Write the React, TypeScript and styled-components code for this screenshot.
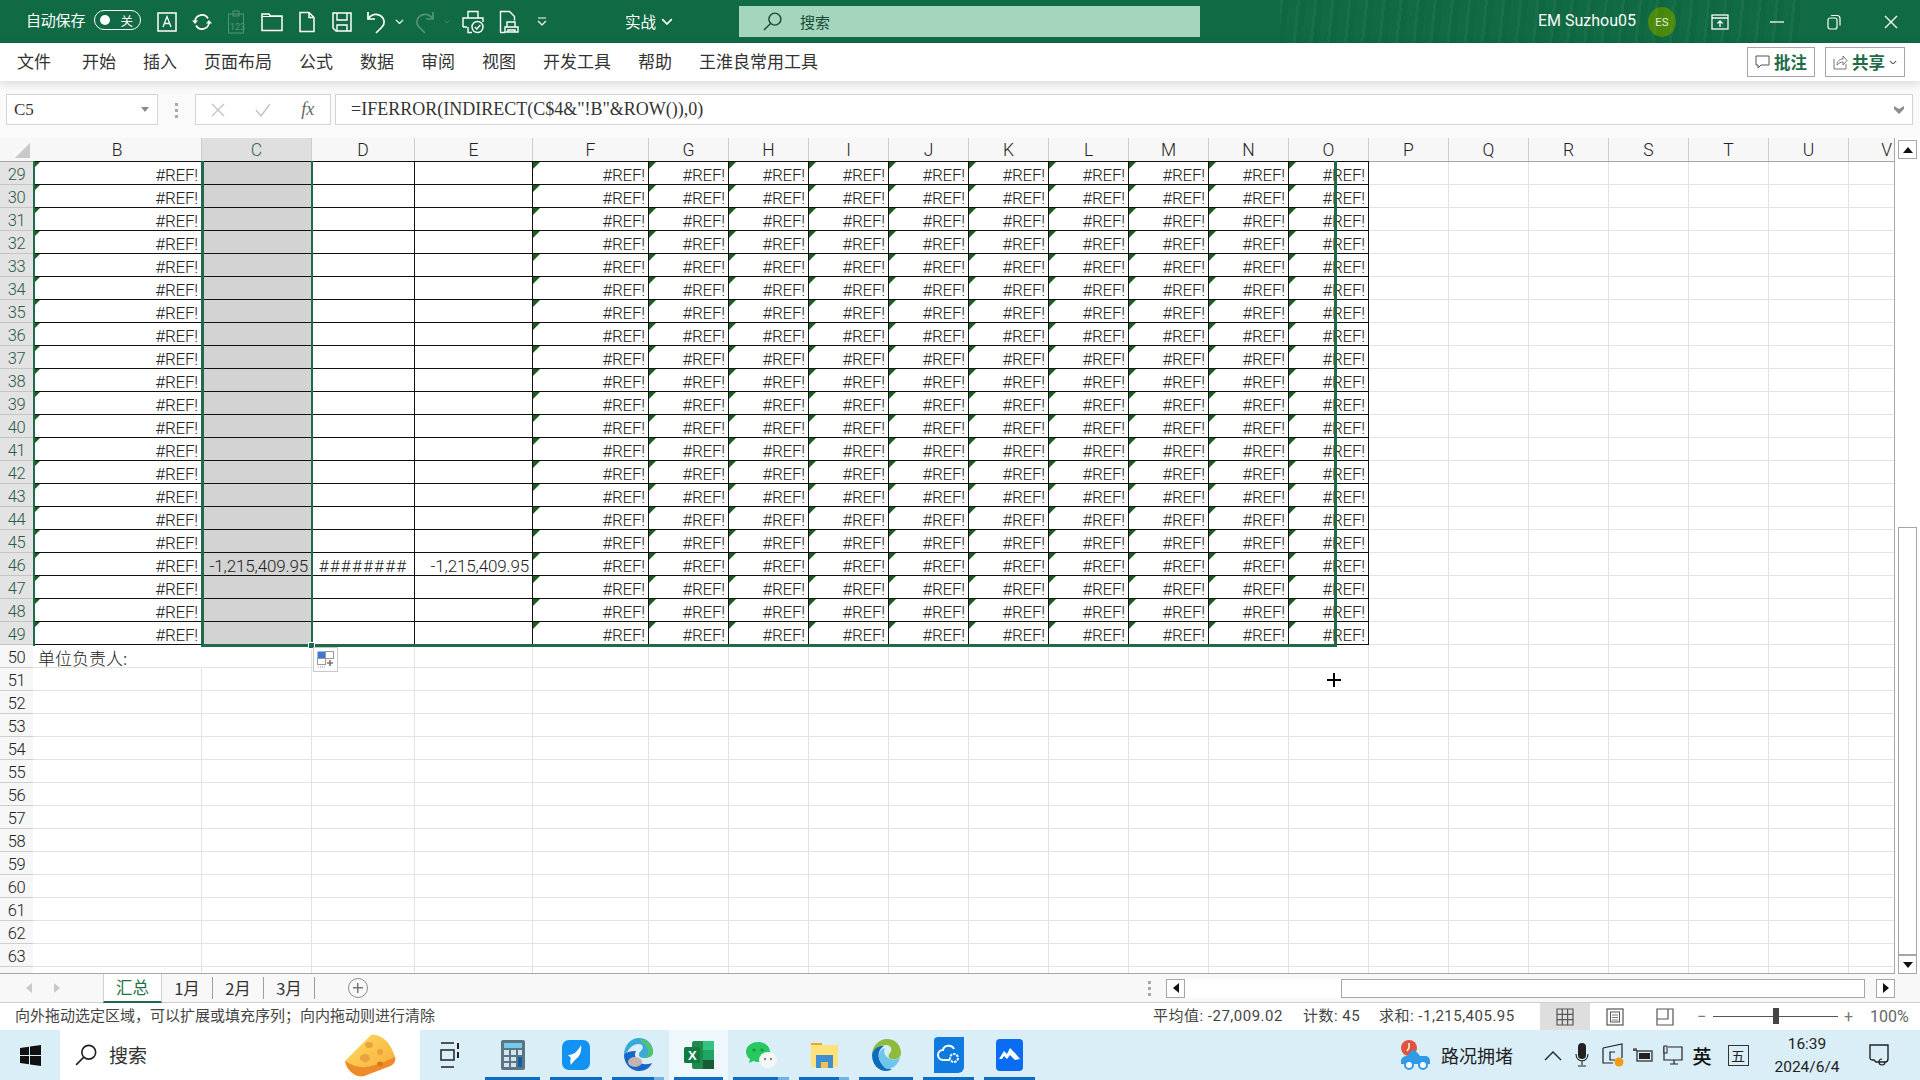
import React from 'react';
import styled, { createGlobalStyle } from 'styled-components';

const CJK = `"Noto Sans CJK SC", sans-serif`;
const UI = `"Roboto", "Noto Sans CJK SC", sans-serif`;
const CELL = `"Roboto", "Noto Sans CJK SC", sans-serif`;

const GlobalStyle = createGlobalStyle`
  html, body {
    margin: 0;
    padding: 0;
    background: #fff;
    overflow: hidden;
    font-family: ${UI};
  }
  * { box-sizing: border-box; }
`;

const Page = styled.div`
  width: 1920px;
  height: 1080px;
  display: flex;
  flex-direction: column;
  overflow: hidden;
  background: #fff;
`;

/* ---------- title bar ---------- */
const TitleBar = styled.div`
  position: relative;
  height: 43px;
  flex: none;
  display: flex;
  align-items: center;
  background: #106a43;
  color: #fff;
  &::after {
    content: '';
    position: absolute;
    top: 0;
    bottom: 0;
    left: 1280px;
    width: 520px;
    pointer-events: none;
    background: repeating-linear-gradient(96deg, rgba(255,255,255,.035) 0 3px, rgba(0,0,0,.03) 3px 9px, transparent 9px 17px);
  }
`;
const QatArea = styled.div`
  width: 739px;
  flex: none;
  display: flex;
  align-items: center;
  padding-left: 26px;
`;
const AutoSave = styled.span`
  font-family: ${CJK};
  font-size: 15px;
  width: 68px;
  white-space: nowrap;
  letter-spacing: -0.2px;
  margin-bottom: 4px;
`;
const Toggle = styled.div`
  width: 47px;
  height: 20px;
  flex: none;
  border: 1.5px solid #fff;
  border-radius: 10px;
  display: flex;
  align-items: center;
  justify-content: space-between;
  padding: 0 7px 0 5px;
  font-family: ${CJK};
  font-size: 12.5px;
  margin-right: 8px;
  margin-bottom: 3px;
  &::before {
    content: '';
    width: 10px;
    height: 10px;
    border-radius: 50%;
    background: #fff;
  }
`;
const Slot = styled.div<{ $w: number; $faded?: boolean }>`
  width: ${(p) => p.$w}px;
  flex: none;
  display: flex;
  align-items: center;
  justify-content: center;
  opacity: ${(p) => (p.$faded ? 0.28 : 1)};
`;
const FileName = styled.span`
  font-family: ${CJK};
  font-size: 15.5px;
  margin-left: 63px;
  margin-right: 5px;
  margin-bottom: 2px;
`;
const SearchBox = styled.div`
  width: 461px;
  height: 31px;
  flex: none;
  background: #a3d6bd;
  display: flex;
  align-items: center;
  gap: 18px;
  padding-left: 24px;
  color: #1a4b36;
  font-family: ${CJK};
  font-size: 15px;
  line-height: 28px;
`;
const UserName = styled.span`
  margin-left: 338px;
  margin-bottom: 2px;
  font-size: 16px;
  width: 98px;
  white-space: nowrap;
  font-family: ${UI};
`;
const Avatar = styled.div`
  width: 28px;
  height: 30px;
  margin-left: 12px;
  margin-right: 15px;
  border-radius: 50%;
  background: #4b8a0c;
  display: flex;
  align-items: center;
  justify-content: center;
  font-size: 11.5px;
  color: #e6f0da;
`;

/* ---------- ribbon tabs ---------- */
const RibbonTabs = styled.div`
  position: relative;
  z-index: 2;
  height: 38px;
  flex: none;
  display: flex;
  align-items: center;
  gap: 27px;
  padding: 0 15px 0 17px;
  background: #fff;
  box-shadow: 0 3px 9px rgba(0, 0, 0, 0.13);
  font-family: ${CJK};
  font-size: 17px;
  color: #333;
`;
const RibbonTab = styled.span<{ $first?: boolean }>`
  margin-right: ${(p) => (p.$first ? '4px' : '0')};
  margin-bottom: 3px;
`;
const RibbonButtons = styled.div`
  margin-left: auto;
  display: flex;
  gap: 10px;
`;
const RibbonButton = styled.div<{ $w: number }>`
  width: ${(p) => p.$w}px;
  height: 30px;
  border: 1px solid #a6a6a6;
  display: flex;
  align-items: center;
  justify-content: center;
  gap: 4px;
  font-weight: 700;
  font-size: 16.5px;
  color: #1d6b49;
`;

/* ---------- formula bar ---------- */
const FormulaArea = styled.div`
  height: 57px;
  flex: none;
  padding: 13px 7px 0 6px;
  display: flex;
  align-items: flex-start;
  background: #fafafa;
`;
const NameBox = styled.div`
  width: 152px;
  height: 31px;
  background: #fff;
  border: 1px solid #d4d4d4;
  display: flex;
  align-items: center;
  justify-content: space-between;
  padding: 0 8px 0 7px;
  font-family: "Liberation Serif", serif;
  font-size: 17px;
  color: #333;
`;
const Caret = styled.span`
  width: 0;
  height: 0;
  border: 4px solid transparent;
  border-top: 5px solid #8a8a8a;
  border-bottom: 0;
`;
const Dots = styled.div`
  width: 37px;
  display: flex;
  flex-direction: column;
  align-items: center;
  gap: 3px;
  padding-top: 9px;
  i {
    width: 3px;
    height: 3px;
    background: #a9a9a9;
  }
`;
const FxBox = styled.div`
  width: 136px;
  height: 31px;
  background: #fff;
  border: 1px solid #d4d4d4;
  margin-right: 4px;
  display: flex;
  align-items: center;
  color: #bdbdbd;
`;
const FxSlot = styled.div`
  width: 45px;
  display: flex;
  justify-content: center;
`;
const FxMark = styled.span`
  font-family: "Liberation Serif", serif;
  font-style: italic;
  font-size: 18px;
  color: #666;
`;
const FormulaInput = styled.div`
  flex: 1;
  height: 31px;
  background: #fff;
  border: 1px solid #d4d4d4;
  display: flex;
  align-items: center;
  justify-content: space-between;
  padding: 0 8px 0 15px;
  font-family: "Liberation Serif", serif;
  font-size: 18px;
  color: #333;
`;

/* ---------- sheet ---------- */
const SheetArea = styled.div`
  height: 836px;
  flex: none;
  display: flex;
  background: #fff;
`;
const Grid = styled.div`
  position: relative;
  width: 1895px;
  height: 836px;
  overflow: hidden;
  flex: none;
  border-right: 1px solid #a8a8a8;
  border-bottom: 1px solid #a8a8a8;
`;
const HeaderRow = styled.div`
  display: flex;
  height: 24px;
  background: #f7f7f7;
  border-bottom: 1px solid #a5a5a5;
`;
const Corner = styled.div`
  width: 33px;
  flex: none;
  position: relative;
  &::after {
    content: '';
    position: absolute;
    right: 3px;
    bottom: 3px;
    border-style: solid;
    border-width: 0 0 15px 15px;
    border-color: transparent transparent #c9c9c9 transparent;
  }
`;
const ColHead = styled.div<{ $w: number; $active?: boolean; $right?: boolean }>`
  width: ${(p) => p.$w}px;
  flex: none;
  display: flex;
  align-items: center;
  justify-content: ${(p) => (p.$right ? 'flex-end' : 'center')};
  padding: 1px ${(p) => (p.$right ? '2px' : '0')} 0 0;
  background: ${(p) => (p.$active ? '#dfdfdf' : 'transparent')};
  border-right: 1px solid #cdcdcd;
  font-family: ${CELL};
  font-weight: 300;
  font-size: 17.5px;
  color: ${(p) => (p.$active ? '#2f6b50' : '#222')};
`;
const Row = styled.div`
  display: flex;
  height: 23px;
`;
const RowHead = styled.div<{ $active?: boolean }>`
  width: 33px;
  flex: none;
  display: flex;
  align-items: center;
  justify-content: center;
  padding-top: 3px;
  background: ${(p) => (p.$active ? '#e3e3e3' : '#f7f7f7')};
  border-bottom: 1px solid ${(p) => (p.$active ? '#c4c4c4' : '#cfcfcf')};
  font-family: ${CELL};
  font-weight: 300;
  font-size: 16.5px;
  letter-spacing: -0.4px;
  color: ${(p) => (p.$active ? '#2d5a46' : '#222')};
`;
const Cell = styled.div<{
  $w: number;
  $table?: boolean;
  $fill?: boolean;
  $tri?: boolean;
  $noRight?: boolean;
  $align?: 'left' | 'center' | 'right';
}>`
  position: relative;
  width: ${(p) => p.$w}px;
  flex: none;
  display: flex;
  align-items: center;
  justify-content: ${(p) =>
    p.$align === 'center' ? 'center' : p.$align === 'left' ? 'flex-start' : 'flex-end'};
  padding: 3px ${(p) => (!p.$align || p.$align === 'right' ? '3px' : '0')} 0
    ${(p) => (p.$align === 'left' ? '5px' : '0')};
  white-space: nowrap;
  background: ${(p) => (p.$fill ? '#d3d3d3' : 'transparent')};
  border-bottom: 1px solid ${(p) => (p.$table ? '#111' : '#e3e3e3')};
  border-right: 1px solid ${(p) => (p.$table ? '#111' : p.$noRight ? 'transparent' : '#e3e3e3')};
  font-family: ${CELL};
  font-weight: 300;
  font-size: 17px;
  letter-spacing: -0.2px;
  color: #222;
  &::before {
    content: ${(p) => (p.$tri ? "''" : 'none')};
    position: absolute;
    left: 0;
    top: 0;
    border-style: solid;
    border-width: 7px 7px 0 0;
    border-color: #1c5e20 transparent transparent transparent;
  }
`;
const WideNum = styled.span<{ $spacing: number }>`
  letter-spacing: ${(p) => p.$spacing}px;
`;
const SignLabel = styled.span`
  font-family: ${CJK};
  font-size: 17px;
  font-weight: 300;
  letter-spacing: 0;
  color: #222;
`;
const SelLine = styled.div<{ $x: number; $w: number }>`
  position: absolute;
  left: ${(p) => p.$x}px;
  top: 23px;
  width: ${(p) => p.$w}px;
  height: 485px;
  background: #1f6a4b;
`;
const SelBottom = styled.div`
  position: absolute;
  left: 201px;
  top: 506px;
  width: 1136px;
  height: 3px;
  background: #1f6a4b;
`;
const Handle = styled.div`
  position: absolute;
  left: 308px;
  top: 504px;
  width: 7px;
  height: 7px;
  background: #1f6a4b;
  border: 1px solid #fff;
`;
const TopRule = styled.div`
  position: absolute;
  left: 33px;
  top: 23px;
  width: 1336px;
  height: 1px;
  background: #111;
`;
const FillPopup = styled.div`
  position: absolute;
  left: 313px;
  top: 509px;
  width: 25px;
  height: 25px;
  background: #fff;
  border: 1px solid #c9c9c9;
  display: flex;
  align-items: center;
  justify-content: center;
`;
const PlusCursor = styled.div`
  position: absolute;
  left: 1327px;
  top: 535px;
  width: 14px;
  height: 14px;
  background:
    linear-gradient(#000, #000) center / 14px 2px no-repeat,
    linear-gradient(#000, #000) center / 2px 14px no-repeat;
`;

const ScrollColumn = styled.div`
  width: 25px;
  flex: none;
  display: flex;
  flex-direction: column;
  align-items: center;
  padding: 2px 3px 0 3px;
`;
const ScrollButton = styled.div<{ $w?: number }>`
  width: ${(p) => p.$w ?? 19}px;
  height: 19px;
  flex: none;
  background: #fff;
  border: 1px solid #a6a6a6;
  display: flex;
  align-items: center;
  justify-content: center;
`;
const Tri = styled.span<{ $dir: 'up' | 'down' | 'left' | 'right'; $color?: string }>`
  width: 0;
  height: 0;
  border: 5px solid transparent;
  ${(p) => {
    const c = p.$color ?? '#111';
    if (p.$dir === 'up') return `border-top: 0; border-bottom: 6px solid ${c};`;
    if (p.$dir === 'down') return `border-bottom: 0; border-top: 6px solid ${c};`;
    if (p.$dir === 'left') return `border-left: 0; border-right: 6px solid ${c};`;
    return `border-right: 0; border-left: 6px solid ${c};`;
  }}
`;
const VThumb = styled.div`
  width: 19px;
  height: 428px;
  margin-top: 368px;
  flex: none;
  border: 1px solid #a6a6a6;
`;
const VFill = styled.div`
  flex: 1;
`;

/* ---------- sheet tabs ---------- */
const TabsBar = styled.div`
  height: 29px;
  flex: none;
  display: flex;
  align-items: center;
  padding-right: 25px;
  background: #f8f8f8;
  border-bottom: 1px solid #cfcfcf;
`;
const TabNav = styled.div`
  width: 103px;
  display: flex;
  gap: 22px;
  padding-left: 26px;
`;
const ActiveTab = styled.div`
  width: 59px;
  height: 29px;
  background: #fff;
  border-left: 1px solid #d0d0d0;
  border-right: 1px solid #d0d0d0;
  border-bottom: 2px solid #1f6a4b;
  display: flex;
  align-items: center;
  justify-content: center;
  font-family: ${CJK};
  font-size: 16.5px;
  color: #217346;
`;
const SheetTab = styled.div`
  width: 51px;
  height: 22px;
  display: flex;
  align-items: center;
  justify-content: center;
  border-right: 1px solid #9e9e9e;
  font-family: ${CJK};
  font-size: 16.5px;
  color: #333;
`;
const AddSheet = styled.div`
  width: 20px;
  height: 20px;
  margin-left: 33px;
  border: 1.5px solid #8c8c8c;
  border-radius: 50%;
  background:
    linear-gradient(#777, #777) center / 10px 1.5px no-repeat,
    linear-gradient(#777, #777) center / 1.5px 10px no-repeat;
`;
const HDots = styled(Dots)`
  width: 6px;
  margin-left: auto;
  margin-right: 14px;
  padding-top: 0;
`;
const HTrack = styled.div`
  flex: none;
  width: 156px;
  height: 19px;
  background: #fff;
`;
const HThumb = styled.div`
  flex: none;
  width: 524px;
  height: 19px;
  margin-right: 11px;
  background: #fff;
  border: 1px solid #a6a6a6;
`;

/* ---------- status bar ---------- */
const StatusBar = styled.div`
  height: 27px;
  flex: none;
  display: flex;
  align-items: center;
  font-family: ${UI};
  font-size: 15px;
  line-height: 25px;
  color: #444;
  background: #fff;
`;
const StatusMsg = styled.div`
  width: 1153px;
  padding-left: 15px;
  white-space: nowrap;
`;
const StatusStat = styled.div<{ $w: number }>`
  width: ${(p) => p.$w}px;
  flex: none;
  white-space: nowrap;
  letter-spacing: 0.5px;
`;
const ViewButton = styled.div<{ $active?: boolean }>`
  width: 50px;
  height: 27px;
  flex: none;
  display: flex;
  align-items: center;
  justify-content: center;
  background: ${(p) => (p.$active ? '#dedede' : 'transparent')};
`;
const ZoomSign = styled.div<{ $w: number }>`
  width: ${(p) => p.$w}px;
  flex: none;
  text-align: center;
  color: #777;
  font-size: 16px;
`;
const ZoomTrack = styled.div`
  position: relative;
  width: 125px;
  height: 1px;
  flex: none;
  background: #555;
  &::after {
    content: '';
    position: absolute;
    left: 60px;
    top: -8px;
    width: 6px;
    height: 16px;
    background: #444;
  }
`;
const ZoomValue = styled.div`
  margin-left: 11px;
  color: #666;
  font-size: 16px;
`;

/* ---------- taskbar ---------- */
const Taskbar = styled.div`
  height: 50px;
  flex: none;
  display: flex;
  align-items: center;
  background: #d9eef7;
  color: #222;
`;
const StartButton = styled.div`
  width: 60px;
  display: flex;
  justify-content: center;
`;
const TaskSearch = styled.div`
  width: 360px;
  height: 50px;
  flex: none;
  background: #fff;
  display: flex;
  align-items: center;
  padding-left: 15px;
  gap: 12px;
  font-family: ${CJK};
  font-size: 19px;
  line-height: 24px;
  color: #333;
`;
const CheeseWrap = styled.div`
  margin-left: auto;
  margin-right: 24px;
  display: flex;
`;
const TaskSlot = styled.div<{ $w: number; $active?: boolean }>`
  position: relative;
  width: ${(p) => p.$w}px;
  height: 50px;
  flex: none;
  display: flex;
  align-items: center;
  justify-content: center;
  background: ${(p) => (p.$active ? 'rgba(255,255,255,.55)' : 'transparent')};
`;
const RunLine = styled.div<{ $stack?: boolean }>`
  position: absolute;
  left: 5px;
  right: 5px;
  bottom: 0;
  height: 3px;
  background: ${(p) =>
    p.$stack ? 'linear-gradient(90deg, #0a6dc6 0 80%, #6fb2e6 80% 100%)' : '#0a6dc6'};
`;
const Tray = styled.div`
  margin-left: auto;
  padding-right: 14px;
  display: flex;
  align-items: center;
`;
const TrayItem = styled.div<{ $w: number }>`
  width: ${(p) => p.$w}px;
  flex: none;
  display: flex;
  align-items: center;
  justify-content: center;
`;
const TrafficText = styled.div`
  width: 102px;
  padding-left: 5px;
  font-family: ${CJK};
  font-size: 18px;
  white-space: nowrap;
`;
const ImeLabel = styled.span`
  font-family: ${CJK};
  font-size: 19px;
  font-weight: 500;
  color: #111;
`;
const ImeBox = styled.span`
  width: 21px;
  height: 21px;
  border: 1px solid #333;
  display: flex;
  align-items: center;
  justify-content: center;
  font-family: ${CJK};
  font-size: 14px;
`;
const Clock = styled.div`
  width: 90px;
  flex: none;
  display: flex;
  flex-direction: column;
  align-items: center;
  gap: 3px;
  font-size: 15.5px;
  line-height: 20px;
  color: #222;
`;

/* ---------- icons ---------- */
type IconProps = { s?: string };
const Svg = ({ w, h, children }: { w: number; h: number; children: React.ReactNode }) => (
  <svg width={w} height={h} viewBox={`0 0 ${w} ${h}`} fill="none">
    {children}
  </svg>
);

const QatBoxA = () => (
  <Svg w={20} h={20}>
    <rect x="1" y="1" width="18" height="18" stroke="#fff" strokeWidth="1.5" />
    <path d="M6 15L10 4.5L14 15M7.5 11.5h5" stroke="#fff" strokeWidth="1.3" />
  </Svg>
);
const QatSync = () => (
  <Svg w={22} h={20}>
    <path d="M4 9a7 7 0 0 1 13-2.5M18 11a7 7 0 0 1-13 2.5" stroke="#fff" strokeWidth="1.7" />
    <path d="M1 8.5h6L4 12zM15 11.5h6L18 8z" fill="#fff" />
  </Svg>
);
const QatClip = () => (
  <Svg w={20} h={24}>
    <rect x="1.5" y="4" width="15" height="19" stroke="#fff" />
    <rect x="6" y="1" width="6" height="5" stroke="#fff" />
    <text x="3" y="20" fontSize="9" fill="#fff" fontFamily="Roboto">123</text>
  </Svg>
);
const QatFolder = () => (
  <Svg w={22} h={20}>
    <path d="M1 18.5V2h7l1.5 2H21v14.5z" stroke="#fff" strokeWidth="1.5" />
    <path d="M1 4.5h20" stroke="#fff" strokeWidth="1" />
  </Svg>
);
const QatDoc = () => (
  <Svg w={18} h={22}>
    <path d="M2 1.5h9l5 5v14H2zM11 1.5v5h5" stroke="#fff" strokeWidth="1.5" />
  </Svg>
);
const QatSave = () => (
  <Svg w={22} h={22}>
    <path d="M2 2h18v18H5l-3-3z" stroke="#fff" strokeWidth="1.5" />
    <path d="M6 2v7h10V2M6 20v-6h10v6" stroke="#fff" strokeWidth="1.4" />
  </Svg>
);
const QatUndo = ({ flip }: { flip?: boolean }) => (
  <svg width="22" height="24" viewBox="0 0 22 24" fill="none" style={flip ? { transform: 'scaleX(-1)' } : undefined}>
    <path d="M2 2v7h7" stroke="#fff" strokeWidth="1.7" />
    <path d="M2 9c3-5 9-6 13-3c4 3 4 8 1 11l-6 6" stroke="#fff" strokeWidth="1.7" />
  </svg>
);
const SmallChevron = ({ s = '#fff', w = 9 }: IconProps & { w?: number }) => (
  <svg width={w} height={w * 0.6} viewBox="0 0 10 6" fill="none">
    <path d="M1 1l4 4l4-4" stroke={s} strokeWidth="1.4" />
  </svg>
);
const QatPrintCheck = () => (
  <Svg w={22} h={24}>
    <path d="M6 8V1.5h10V8M1 17V8h20v4M5 17H1M6 17v5.5h4" stroke="#fff" strokeWidth="1.4" />
    <circle cx="15.5" cy="17" r="5.5" stroke="#fff" strokeWidth="1.4" fill="#106a43" />
    <path d="M12.8 17l2 2l3.5-4" stroke="#fff" strokeWidth="1.3" />
  </Svg>
);
const QatDocPrint = () => (
  <Svg w={20} h={24}>
    <path d="M1.5 23V1.5h9l5 5v4M1.5 22.5H6" stroke="#fff" strokeWidth="1.4" />
    <path d="M8 17v-5h8v5M6 22v-5h13v5zM9 22v-2h7v2" stroke="#fff" strokeWidth="1.4" />
  </Svg>
);
const QatMore = () => (
  <Svg w={10} h={10}>
    <path d="M1 1h8M1 4l4 4l4-4" stroke="#fff" strokeWidth="1.2" />
  </Svg>
);
const Magnifier = ({ s = '#1a4b36', size = 19 }: IconProps & { size?: number }) => (
  <svg width={size} height={size} viewBox="0 0 20 20" fill="none">
    <circle cx="12.5" cy="7.5" r="6.3" stroke={s} strokeWidth="1.5" />
    <path d="M8 12L1 19" stroke={s} strokeWidth="1.5" />
  </svg>
);
const RibbonDisplay = () => (
  <Svg w={18} h={16}>
    <rect x="1" y="1" width="16" height="14" stroke="#fff" strokeWidth="1.3" />
    <path d="M1 4h16" stroke="#fff" strokeWidth="1.5" />
    <path d="M9 13V7M6.5 9.5L9 7l2.5 2.5" stroke="#fff" strokeWidth="1.3" />
  </Svg>
);
const WinMin = () => (
  <Svg w={14} h={4}>
    <path d="M0 2h14" stroke="#fff" strokeWidth="1.3" />
  </Svg>
);
const WinRestore = () => (
  <Svg w={14} h={16}>
    <rect x="1" y="4" width="9" height="11" rx="2" stroke="#fff" strokeWidth="1.2" />
    <path d="M4 1.5h6a3 3 0 0 1 3 3v7" stroke="#fff" strokeWidth="1.2" />
  </Svg>
);
const WinClose = () => (
  <Svg w={14} h={14}>
    <path d="M1 1l12 12M13 1L1 13" stroke="#fff" strokeWidth="1.3" />
  </Svg>
);
const CommentIcon = () => (
  <Svg w={15} h={14}>
    <path d="M1 1h13v9H6l-3 3v-3H1z" stroke="#555" strokeWidth="1" />
  </Svg>
);
const ShareIcon = () => (
  <Svg w={15} h={15}>
    <path d="M1 4v10h12V9" stroke="#777" strokeWidth="1" />
    <path d="M4 10c0-4 3-6 6-6V1l4 4.5L10 10V7C8 7 6 8 4 10z" stroke="#777" strokeWidth="1" />
  </Svg>
);
const FxX = () => (
  <Svg w={14} h={14}>
    <path d="M1 1l12 12M13 1L1 13" stroke="#c4c4c4" strokeWidth="1.4" />
  </Svg>
);
const FxCheck = () => (
  <Svg w={16} h={14}>
    <path d="M1 7l5 6L15 1" stroke="#c4c4c4" strokeWidth="1.4" />
  </Svg>
);
const DownGuard = () => (
  <Svg w={10} h={8}>
    <path d="M0 0l5 3l5-3v3L5 8L0 3z" fill="#8d8d8d" />
  </Svg>
);
const AutoFillIcon = () => (
  <Svg w={17} h={17}>
    <rect x="0.5" y="0.5" width="8" height="7" fill="#3d78d8" />
    <rect x="8.5" y="0.5" width="8" height="7" stroke="#999" />
    <rect x="0.5" y="7.5" width="8" height="6" stroke="#999" />
    <path d="M1 16h7" stroke="#999" strokeDasharray="1 1" />
    <path d="M13 9v6M10 12h6" stroke="#777" strokeWidth="1.6" />
  </Svg>
);
const GridViewIcon = () => (
  <Svg w={18} h={18}>
    <path d="M1 1h16v16H1zM1 6.3h16M1 11.6h16M6.3 1v16M11.6 1v16" stroke="#555" strokeWidth="1.2" />
  </Svg>
);
const PageViewIcon = () => (
  <Svg w={18} h={18}>
    <rect x="1" y="1" width="16" height="16" stroke="#555" strokeWidth="1.2" />
    <rect x="4.5" y="4" width="9" height="10" stroke="#555" />
    <path d="M6 7h6M6 9.5h6M6 12h6" stroke="#777" />
  </Svg>
);
const BreakViewIcon = () => (
  <Svg w={18} h={18}>
    <path d="M1 1h16v16H1zM1 11h11V1" stroke="#555" strokeWidth="1.2" />
  </Svg>
);
const WindowsLogo = () => (
  <Svg w={21} h={21}>
    <path d="M0 3l9-1.3V10H0zM10 1.5L21 0v10H10zM0 11h9v8.3L0 18zM10 11h11v10l-11-1.5z" fill="#111" />
  </Svg>
);
const Cheese = () => (
  <Svg w={52} h={44}>
    <defs>
      <linearGradient id="ch" x1="0" y1="0" x2="1" y2="1">
        <stop offset="0" stopColor="#ffdc5e" />
        <stop offset="1" stopColor="#f6a93b" />
      </linearGradient>
    </defs>
    <path d="M1 28L27 2c10-2 20 8 24 22c1 4-1 7-5 9L20 43c-8 2-17-5-19-15z" fill="url(#ch)" />
    <path d="M1 28c6 4 14 7 21 6c10-1 20-6 29-10c1 4-1 7-5 9L20 43c-8 2-17-5-19-15z" fill="#ee8a2a" />
    <ellipse cx="25" cy="12" rx="4" ry="3" fill="#e9a33d" />
    <ellipse cx="36" cy="19" rx="3" ry="3" fill="#e9a33d" />
    <ellipse cx="21" cy="25" rx="5" ry="4" fill="#e9a33d" />
    <ellipse cx="36" cy="31" rx="3" ry="2.5" fill="#d9771f" />
  </Svg>
);
const TaskView = () => (
  <Svg w={20} h={26}>
    <path d="M1 1h13M1 25h13M1 8h13v10H1z" stroke="#222" strokeWidth="1.5" />
    <path d="M18 1v6M18 10v6" stroke="#222" strokeWidth="2" />
  </Svg>
);
const Calculator = () => (
  <Svg w={24} h={30}>
    <rect width="24" height="30" rx="2" fill="#5d7482" />
    <rect x="3" y="3" width="18" height="5" fill="#71cbe9" />
    <path d="M3 10h5v5H3zM10 10h5v5h-5zM17 10h4v5h-4zM3 17h5v4H3zM10 17h5v4h-5zM3 23h5v4H3zM10 23h5v4h-5z" fill="#cfe6f0" />
    <rect x="17" y="17" width="4" height="10" fill="#115ea3" />
  </Svg>
);
const BlueWing = () => (
  <Svg w={28} h={30}>
    <rect width="28" height="30" rx="7" fill="#1293f3" />
    <path d="M19 5c1 6-1 11-5 14c-2 2-4 4-5 6c-1-3-1-5 0-7L6 15c3 0 6-1 8-3c2-2 4-5 5-7z" fill="#fff" />
  </Svg>
);
const EdgeBeta = () => (
  <Svg w={32} h={36}>
    <path d="M2 18C2 8 9 1 17 1c8 0 14 6 14 14c0 4-4 6-9 6c-3 0-5-1-5-3c0-5 6-5 3-10C15 5 7 9 4 18z" fill="#38a9d9" />
    <path d="M17 2c7 0 14 5 14 13c0 5-5 6-9 5c5 0 6-9 0-13z" fill="#4fc36f" />
    <path d="M2 18c0 9 7 16 15 16c6 0 11-3 13-8c-5 2-11 2-14-2c-3-3-4-7-2-10C8 14 5 15 2 18z" fill="#1667c7" />
    <ellipse cx="13" cy="25" rx="7" ry="5" fill="#c7b2ad" />
  </Svg>
);
const ExcelIcon = () => (
  <Svg w={30} h={30}>
    <rect x="8" y="1" width="22" height="28" rx="2" fill="#1f8a4c" />
    <rect x="19" y="1" width="11" height="9" fill="#33c481" />
    <rect x="19" y="10" width="11" height="10" fill="#21a366" />
    <rect x="19" y="20" width="11" height="9" fill="#185c37" />
    <rect x="0" y="7" width="16" height="16" rx="1.5" fill="#107c41" />
    <text x="4" y="20" fontSize="13" fontWeight="700" fill="#fff" fontFamily="Liberation Sans">X</text>
  </Svg>
);
const WeChatIcon = () => (
  <Svg w={32} h={30}>
    <path d="M13 2C6 2 1 6.5 1 12c0 3 2 6 4 7l-1 4l4.500-2c1.500.5 3 1 4.500 1c7 0 12-4.500 12-10S20 2 13 2z" fill="#29c760" />
    <circle cx="9" cy="10" r="1.6" fill="#139a44" />
    <circle cx="17" cy="10" r="1.6" fill="#139a44" />
    <ellipse cx="23" cy="20" rx="9" ry="8" fill="#f6f6f6" />
    <circle cx="20" cy="19" r="1.2" fill="#888" />
    <circle cx="26" cy="19" r="1.2" fill="#888" />
  </Svg>
);
const FolderIcon = () => (
  <Svg w={28} h={28}>
    <path d="M1 2h11v4H1z" fill="#e5a92a" />
    <rect x="1" y="4" width="27" height="22" fill="#ffe27a" />
    <path d="M6 14h17v13h-5v-6h-7v6H6z" fill="#3f8ed3" />
    <rect x="11" y="21" width="7" height="6" fill="#f0c14d" />
  </Svg>
);
const EdgeIcon = () => (
  <Svg w={32} h={34}>
    <path d="M2 17C2 8 9 1 17 1c8 0 14 6 14 14c0 5-5 7-10 6c-3-1-3-4-1-6c3-3 1-8-4-8C9 7 4 11 2 17z" fill="#8dbb3a" />
    <path d="M2 17C3 11 9 7 14 8c-5 3-7 9-4 15c2 4 7 8 12 8c-2 1-3 2-6 2C8 33 2 26 2 17z" fill="#0f6cbd" />
    <path d="M10 23c-3-6 0-12 5-13c-2 4 0 9 5 11c4 1 8 0 10-2c-1 7-7 12-13 12c-3-1-5-4-7-8z" fill="#6fc6ec" />
  </Svg>
);
const CloudIcon = () => (
  <Svg w={30} h={36}>
    <path d="M4 0h26v30a6 6 0 0 1-6 6H0V4a4 4 0 0 1 4-4z" fill="#0f7be0" />
    <path d="M9 23a5 5 0 0 1 0-10c1-5 9-6 11-1" stroke="#fff" strokeWidth="2" />
    <path d="M9 23h7" stroke="#fff" strokeWidth="2" />
    <circle cx="20" cy="21" r="4" stroke="#fff" strokeWidth="2" strokeDasharray="2.500 1" />
  </Svg>
);
const MIcon = () => (
  <Svg w={27} h={32}>
    <rect width="27" height="32" rx="4" fill="#0a6cf5" />
    <path d="M3 20l5-8l3 3l3-6l5 5l5 6l-5 1l-5-5l-3 4l-3-3l-2 3z" fill="#fff" />
  </Svg>
);
const CarIcon = () => (
  <Svg w={30} h={32}>
    <circle cx="8" cy="9" r="8" fill="#e0533c" />
    <path d="M8 4v5l-2 3" stroke="#fff" strokeWidth="1.4" />
    <path d="M6 17l5-6c3 0 6 3 8 6h5c3 0 5 2 5 5v3H0v-3c0-3 3-5 6-5z" fill="#2f9be6" />
    <circle cx="8" cy="26" r="4" fill="#fff" stroke="#2f9be6" strokeWidth="2" />
    <circle cx="22" cy="26" r="4" fill="#fff" stroke="#2f9be6" strokeWidth="2" />
  </Svg>
);
const TrayUp = () => (
  <Svg w={18} h={11}>
    <path d="M1 10l8-8l8 8" stroke="#222" strokeWidth="1.4" />
  </Svg>
);
const MicIcon = () => (
  <Svg w={14} h={24}>
    <rect x="3" y="0" width="8" height="16" rx="4" fill="#222" />
    <path d="M1 11c0 9 12 9 12 0M7 18v4M3 23h8" stroke="#222" strokeWidth="1.1" />
  </Svg>
);
const SyncTray = () => (
  <Svg w={22} h={24}>
    <path d="M1 5L20 1v14M1 5v15h10" stroke="#222" strokeWidth="1.2" />
    <path d="M13 9H8v8h5" stroke="#222" strokeWidth="1.2" />
    <circle cx="17" cy="19" r="4.500" fill="#f49a16" />
  </Svg>
);
const BatteryIcon = () => (
  <Svg w={20} h={16}>
    <rect x="4" y="4" width="15" height="10" stroke="#222" strokeWidth="1.2" />
    <rect x="6" y="6" width="11" height="6" fill="#222" />
    <path d="M0 3h4M1 1v3M3 1v3" stroke="#222" />
  </Svg>
);
const MonitorIcon = () => (
  <Svg w={20} h={20}>
    <path d="M5 2h14v13H1V2h3M7 19h8M11 15v4" stroke="#222" strokeWidth="1.2" />
    <rect x="1" y="1" width="3" height="7" stroke="#222" fill="#d9eef7" />
  </Svg>
);
const NotifyIcon = () => (
  <Svg w={20} h={22}>
    <path d="M1 1h18v14c0 2-1 3-3 3H7l-2-2H3c-1 0-2-1-2-2z" stroke="#222" strokeWidth="1.4" />
    <path d="M13 15a3 3 0 1 0 3 3" stroke="#222" strokeWidth="1.2" />
  </Svg>
);

/* ---------- data ---------- */
const COLS: { name: string; w: number }[] = [
  { name: 'B', w: 169 }, { name: 'C', w: 110 }, { name: 'D', w: 103 }, { name: 'E', w: 118 },
  { name: 'F', w: 116 }, { name: 'G', w: 80 }, { name: 'H', w: 80 }, { name: 'I', w: 80 },
  { name: 'J', w: 80 }, { name: 'K', w: 80 }, { name: 'L', w: 80 }, { name: 'M', w: 80 },
  { name: 'N', w: 80 }, { name: 'O', w: 80 }, { name: 'P', w: 80 }, { name: 'Q', w: 80 },
  { name: 'R', w: 80 }, { name: 'S', w: 80 }, { name: 'T', w: 80 }, { name: 'U', w: 80 }, { name: 'V', w: 46 },
];
const TABLE_END = 14; // B through O have the black table borders
const BLANK = ['C', 'D', 'E'];
const ROWS = Array.from({ length: 36 }, (_, i) => 29 + i);
const RIBBON = ['文件', '开始', '插入', '页面布局', '公式', '数据', '审阅', '视图', '开发工具', '帮助', '王淮良常用工具'];

function SheetCell({ col, idx, row }: { col: { name: string; w: number }; idx: number; row: number }) {
  const inTable = row <= 49 && idx < TABLE_END;
  if (row === 50 && idx === 0) {
    return <Cell $w={col.w} $noRight $align="left"><SignLabel>单位负责人:</SignLabel></Cell>;
  }
  if (!inTable) {
    return <Cell $w={col.w} />;
  }
  const blank = BLANK.includes(col.name);
  if (row === 46 && col.name === 'C') {
    return <Cell $w={col.w} $table $fill><WideNum $spacing={-0.15}>-1,215,409.95</WideNum></Cell>;
  }
  if (row === 46 && col.name === 'D') {
    return <Cell $w={col.w} $table $align="center"><WideNum $spacing={1.2}>########</WideNum></Cell>;
  }
  if (row === 46 && col.name === 'E') {
    return <Cell $w={col.w} $table><WideNum $spacing={-0.15}>-1,215,409.95</WideNum></Cell>;
  }
  return (
    <Cell $w={col.w} $table $fill={col.name === 'C'} $tri={!blank}>
      {blank ? '' : '#REF!'}
    </Cell>
  );
}

export default function App() {
  return (
    <Page>
      <GlobalStyle />
      <TitleBar>
        <QatArea>
          <AutoSave>自动保存</AutoSave>
          <Toggle>关</Toggle>
          <Slot $w={35}><QatBoxA /></Slot>
          <Slot $w={35}><QatSync /></Slot>
          <Slot $w={35} $faded><QatClip /></Slot>
          <Slot $w={35}><QatFolder /></Slot>
          <Slot $w={35}><QatDoc /></Slot>
          <Slot $w={35}><QatSave /></Slot>
          <Slot $w={35}><QatUndo /></Slot>
          <Slot $w={10}><SmallChevron /></Slot>
          <Slot $w={40} $faded><QatUndo flip /></Slot>
          <Slot $w={6} $faded><SmallChevron /></Slot>
          <Slot $w={46}><QatPrintCheck /></Slot>
          <Slot $w={26}><QatDocPrint /></Slot>
          <Slot $w={40}><QatMore /></Slot>
          <FileName>实战</FileName>
          <SmallChevron w={12} />
        </QatArea>
        <SearchBox>
          <Magnifier />
          搜索
        </SearchBox>
        <UserName>EM Suzhou05</UserName>
        <Avatar>ES</Avatar>
        <Slot $w={57}><RibbonDisplay /></Slot>
        <Slot $w={57}><WinMin /></Slot>
        <Slot $w={57}><WinRestore /></Slot>
        <Slot $w={57}><WinClose /></Slot>
      </TitleBar>

      <RibbonTabs>
        {RIBBON.map((t, i) => (
          <RibbonTab key={t} $first={i === 0}>{t}</RibbonTab>
        ))}
        <RibbonButtons>
          <RibbonButton $w={68}><CommentIcon />批注</RibbonButton>
          <RibbonButton $w={80}><ShareIcon />共享<SmallChevron s="#666" w={8} /></RibbonButton>
        </RibbonButtons>
      </RibbonTabs>

      <FormulaArea>
        <NameBox>C5<Caret /></NameBox>
        <Dots><i /><i /><i /></Dots>
        <FxBox>
          <FxSlot><FxX /></FxSlot>
          <FxSlot><FxCheck /></FxSlot>
          <FxSlot><FxMark>fx</FxMark></FxSlot>
        </FxBox>
        <FormulaInput>
          <span>=IFERROR(INDIRECT(C$4&amp;"!B"&amp;ROW()),0)</span>
          <DownGuard />
        </FormulaInput>
      </FormulaArea>

      <SheetArea>
        <Grid>
          <HeaderRow>
            <Corner />
            {COLS.map((c) => (
              <ColHead key={c.name} $w={c.w} $active={c.name === 'C'} $right={c.name === 'V'}>
                {c.name}
              </ColHead>
            ))}
          </HeaderRow>
          {ROWS.map((r) => (
            <Row key={r}>
              <RowHead $active={r <= 49}>{r <= 63 ? r : ''}</RowHead>
              {COLS.map((c, i) => (
                <SheetCell key={c.name} col={c} idx={i} row={r} />
              ))}
            </Row>
          ))}
          <TopRule />
          <SelLine $x={33} $w={2} />
          <SelLine $x={201} $w={3} />
          <SelLine $x={311} $w={2} />
          <SelLine $x={1334} $w={3} />
          <SelBottom />
          <Handle />
          <FillPopup><AutoFillIcon /></FillPopup>
          <PlusCursor />
        </Grid>
        <ScrollColumn>
          <ScrollButton><Tri $dir="up" /></ScrollButton>
          <VThumb />
          <VFill />
          <ScrollButton><Tri $dir="down" /></ScrollButton>
        </ScrollColumn>
      </SheetArea>

      <TabsBar>
        <TabNav>
          <Tri $dir="left" $color="#c9c9c9" />
          <Tri $dir="right" $color="#c9c9c9" />
        </TabNav>
        <ActiveTab>汇总</ActiveTab>
        <SheetTab>1月</SheetTab>
        <SheetTab>2月</SheetTab>
        <SheetTab>3月</SheetTab>
        <AddSheet />
        <HDots><i /><i /><i /></HDots>
        <ScrollButton><Tri $dir="left" /></ScrollButton>
        <HTrack />
        <HThumb />
        <ScrollButton><Tri $dir="right" /></ScrollButton>
      </TabsBar>

      <StatusBar>
        <StatusMsg>向外拖动选定区域，可以扩展或填充序列；向内拖动则进行清除</StatusMsg>
        <StatusStat $w={150}>平均值: -27,009.02</StatusStat>
        <StatusStat $w={76}>计数: 45</StatusStat>
        <StatusStat $w={161}>求和: -1,215,405.95</StatusStat>
        <ViewButton $active><GridViewIcon /></ViewButton>
        <ViewButton><PageViewIcon /></ViewButton>
        <ViewButton><BreakViewIcon /></ViewButton>
        <ZoomSign $w={23}>−</ZoomSign>
        <ZoomTrack />
        <ZoomSign $w={21}>+</ZoomSign>
        <ZoomValue>100%</ZoomValue>
      </StatusBar>

      <Taskbar>
        <StartButton><WindowsLogo /></StartButton>
        <TaskSearch>
          <Magnifier s="#222" size={22} />
          搜索
          <CheeseWrap><Cheese /></CheeseWrap>
        </TaskSearch>
        <TaskSlot $w={60}><TaskView /></TaskSlot>
        <TaskSlot $w={65}><Calculator /><RunLine /></TaskSlot>
        <TaskSlot $w={62}><BlueWing /><RunLine /></TaskSlot>
        <TaskSlot $w={62}><EdgeBeta /><RunLine $stack /></TaskSlot>
        <TaskSlot $w={59} $active><ExcelIcon /><RunLine /></TaskSlot>
        <TaskSlot $w={66}><WeChatIcon /><RunLine $stack /></TaskSlot>
        <TaskSlot $w={60}><FolderIcon /><RunLine $stack /></TaskSlot>
        <TaskSlot $w={64}><EdgeIcon /><RunLine /></TaskSlot>
        <TaskSlot $w={61}><CloudIcon /><RunLine /></TaskSlot>
        <TaskSlot $w={61}><MIcon /><RunLine /></TaskSlot>
        <Tray>
          <TrayItem $w={40}><CarIcon /></TrayItem>
          <TrafficText>路况拥堵</TrafficText>
          <TrayItem $w={30}><TrayUp /></TrayItem>
          <TrayItem $w={28}><MicIcon /></TrayItem>
          <TrayItem $w={34}><SyncTray /></TrayItem>
          <TrayItem $w={26}><BatteryIcon /></TrayItem>
          <TrayItem $w={34}><MonitorIcon /></TrayItem>
          <TrayItem $w={24}><ImeLabel>英</ImeLabel></TrayItem>
          <TrayItem $w={48}><ImeBox>五</ImeBox></TrayItem>
          <Clock><span>16:39</span><span>2024/6/4</span></Clock>
          <TrayItem $w={54}><NotifyIcon /></TrayItem>
        </Tray>
      </Taskbar>
    </Page>
  );
}
